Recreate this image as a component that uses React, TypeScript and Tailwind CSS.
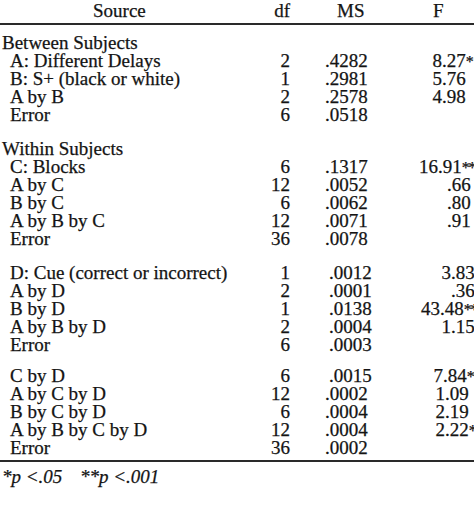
import React from 'react'

// name, df, MS, F, stars, optional override for where F's decimal point sits
type Row = [string, string, string, string?, string?, string?]

interface Section {
  label?: string
  gap: string
  msPad: string
  fWhole: string
  rows: Row[]
}

// F values sit on their decimal point; the scan drifts a little from block to block
const sections: Section[] = [
  {
    label: 'Between Subjects',
    gap: 'mt-[9px]',
    msPad: 'pl-[35px]',
    fWhole: 'w-[47px]',
    rows: [
      ['A: Different Delays', '2', '.4282', '8.27', '*'],
      ['B: S+ (black or white)', '1', '.2981', '5.76'],
      ['A by B', '2', '.2578', '4.98'],
      ['Error', '6', '.0518'],
    ],
  },
  {
    label: 'Within Subjects',
    gap: 'mt-[16px]',
    msPad: 'pl-[35px]',
    fWhole: 'w-[52px]',
    rows: [
      ['C: Blocks', '6', '.1317', '16.91', '**', 'w-[43px]'],
      ['A by C', '12', '.0052', '.66'],
      ['B by C', '6', '.0062', '.80'],
      ['A by B by C', '12', '.0071', '.91'],
      ['Error', '36', '.0078'],
    ],
  },
  {
    gap: 'mt-[16px]',
    msPad: 'pl-[39px]',
    fWhole: 'w-[56px]',
    rows: [
      ['D: Cue (correct or incorrect)', '1', '.0012', '3.83'],
      ['A by D', '2', '.0001', '.36'],
      ['B by D', '1', '.0138', '43.48', '**', 'w-[45px]'],
      ['A by B by D', '2', '.0004', '1.15'],
      ['Error', '6', '.0003'],
    ],
  },
  {
    gap: 'mt-[13px]',
    msPad: 'pl-[35px]',
    fWhole: 'w-[50px]',
    rows: [
      ['C by D', '6', '.0015', '7.84', '**', 'w-[48px]'],
      ['A by C by D', '12', '.0002', '1.09'],
      ['B by C by D', '6', '.0004', '2.19'],
      ['A by B by C by D', '12', '.0004', '2.22', '*'],
      ['Error', '36', '.0002'],
    ],
  },
]

function FValue({ value, stars, whole }: { value?: string; stars?: string; whole: string }) {
  if (!value) return null
  const dot = value.indexOf('.')
  return (
    <div className="flex shrink-0 items-baseline">
      <span className={`${whole} shrink-0 text-right`}>{value.slice(0, dot)}</span>
      <span className="shrink-0">{value.slice(dot)}</span>
      {stars && <span className="shrink-0 text-[16px] tracking-[-1.5px]">{stars}</span>}
    </div>
  )
}

function DataRow({ row, section, first }: { row: Row; section: Section; first: boolean }) {
  const [name, df, ms, f, stars, fWhole] = row
  // "C by D" prints with the MS column of the block above it
  const late = first && name === 'C by D'
  return (
    <div className="flex h-[18px] leading-[18px] whitespace-nowrap">
      <div className="w-[262px] shrink-0 pl-[10px]">{name}</div>
      <div className="w-[28px] shrink-0 text-right">{df}</div>
      <div className={`w-[105px] shrink-0 ${late ? 'pl-[39px]' : section.msPad}`}>{ms}</div>
      <FValue value={f} stars={stars} whole={fWhole ?? section.fWhole} />
    </div>
  )
}

export default function App() {
  return (
    <div
      className="w-[474px] h-[505px] overflow-hidden bg-white text-[#141414] text-[19px] [-webkit-text-stroke:0.25px_#141414]"
      style={{ fontFamily: '"Liberation Serif", "Times New Roman", serif' }}
    >
      <div className="flex h-[23px] leading-[22px] whitespace-nowrap">
        <div className="w-[262px] shrink-0 pl-[93px]">Source</div>
        <div className="w-[28px] shrink-0 text-right">df</div>
        <div className="w-[105px] shrink-0 pl-[47px]">MS</div>
        <div className="pl-[38px]">F</div>
      </div>
      <div className="h-[2px] bg-[#2a2a2a]" />

      {sections.map((section, i) => (
        <div key={i} className={section.gap}>
          {section.label && (
            <div className="h-[18px] leading-[18px] pl-[2px] whitespace-nowrap">
              {section.label}
            </div>
          )}
          {section.rows.map((row, j) => (
            <DataRow key={j} row={row} section={section} first={j === 0} />
          ))}
        </div>
      ))}

      <div className="mt-[3px] h-[2px] bg-[#2a2a2a]" />
      <div className="mt-[5px] flex pl-[2px] italic leading-[20px] whitespace-nowrap">
        <span className="w-[78px]">*p &lt;.05</span>
        <span>**p &lt;.001</span>
      </div>
    </div>
  )
}
